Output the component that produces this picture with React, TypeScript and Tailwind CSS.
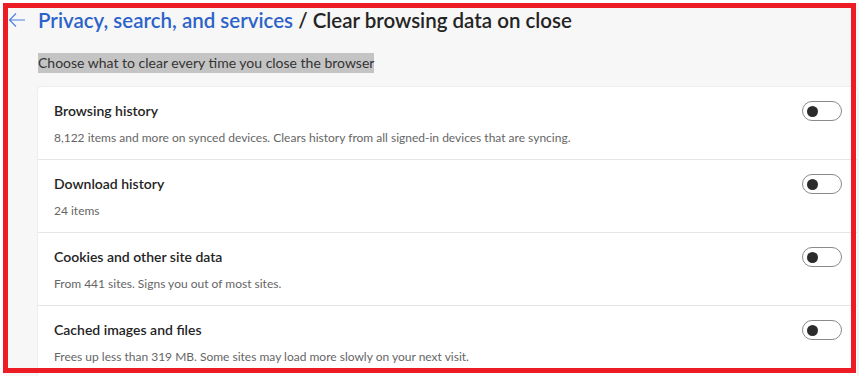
import React from 'react';

const rows = [
  {
    title: 'Browsing history',
    desc: '8,122 items and more on synced devices. Clears history from all signed-in devices that are syncing.',
  },
  { title: 'Download history', desc: '24 items' },
  { title: 'Cookies and other site data', desc: 'From 441 sites. Signs you out of most sites.' },
  {
    title: 'Cached images and files',
    desc: 'Frees up less than 319 MB. Some sites may load more slowly on your next visit.',
  },
];

const Toggle: React.FC = () => (
  <div className="w-[40px] h-[20px] rounded-full border border-[#8a8a8a] bg-white flex items-center pl-[4px] shrink-0">
    <div className="w-[11px] h-[11px] rounded-full bg-[#2b2b2b]" />
  </div>
);

export default function App() {
  return (
    <div className="relative w-[859px] h-[376px] bg-white overflow-hidden font-['Lato',sans-serif]">
      <div className="ml-[3px] mt-[3px] h-[373px] bg-[#f7f7f7] overflow-hidden">
        <div className="flex items-center h-[33px]">
          <svg width="18" height="16" viewBox="0 0 18 16" className="ml-[5px] mr-[12px] shrink-0">
            <path d="M17 8H1.5M8 1.5L1.5 8L8 14.5" fill="none" stroke="#4a7fdc" strokeWidth="1.1" />
          </svg>
          <h1 className="text-[20.5px] leading-[28px] font-semibold text-[#242424] whitespace-nowrap">
            <span className="text-[#2d63c8]">Privacy, search, and services</span> / Clear browsing data on close
          </h1>
        </div>
        <div className="flex pl-[35px] mt-[17px]">
          <span className="bg-[#c4c4c4] text-[#333] text-[14px] leading-[20px]">
            Choose what to clear every time you close the browser
          </span>
        </div>
        <div className="ml-[35px] mt-[14px] w-[819px] bg-white rounded-[4px] shadow-[0_0_2px_rgba(0,0,0,0.12)]">
          {rows.map((r, i) => (
            <div
              key={r.title}
              className={`flex items-start justify-between pl-[16px] pr-[15px] pt-[14px] pb-[13px] ${i > 0 ? 'border-t border-[#e5e5e5]' : ''}`}
            >
              <div>
                <div className="text-[14px] leading-[20px] font-semibold text-[#242424]">{r.title}</div>
                <div className="mt-[9px] text-[12px] leading-[16px] text-[#666]">{r.desc}</div>
              </div>
              <Toggle />
            </div>
          ))}
        </div>
      </div>
      <div className="absolute left-[3px] top-[3px] w-[853px] h-[370px] border-[5px] border-[#ed1c24] pointer-events-none" />
    </div>
  );
}
